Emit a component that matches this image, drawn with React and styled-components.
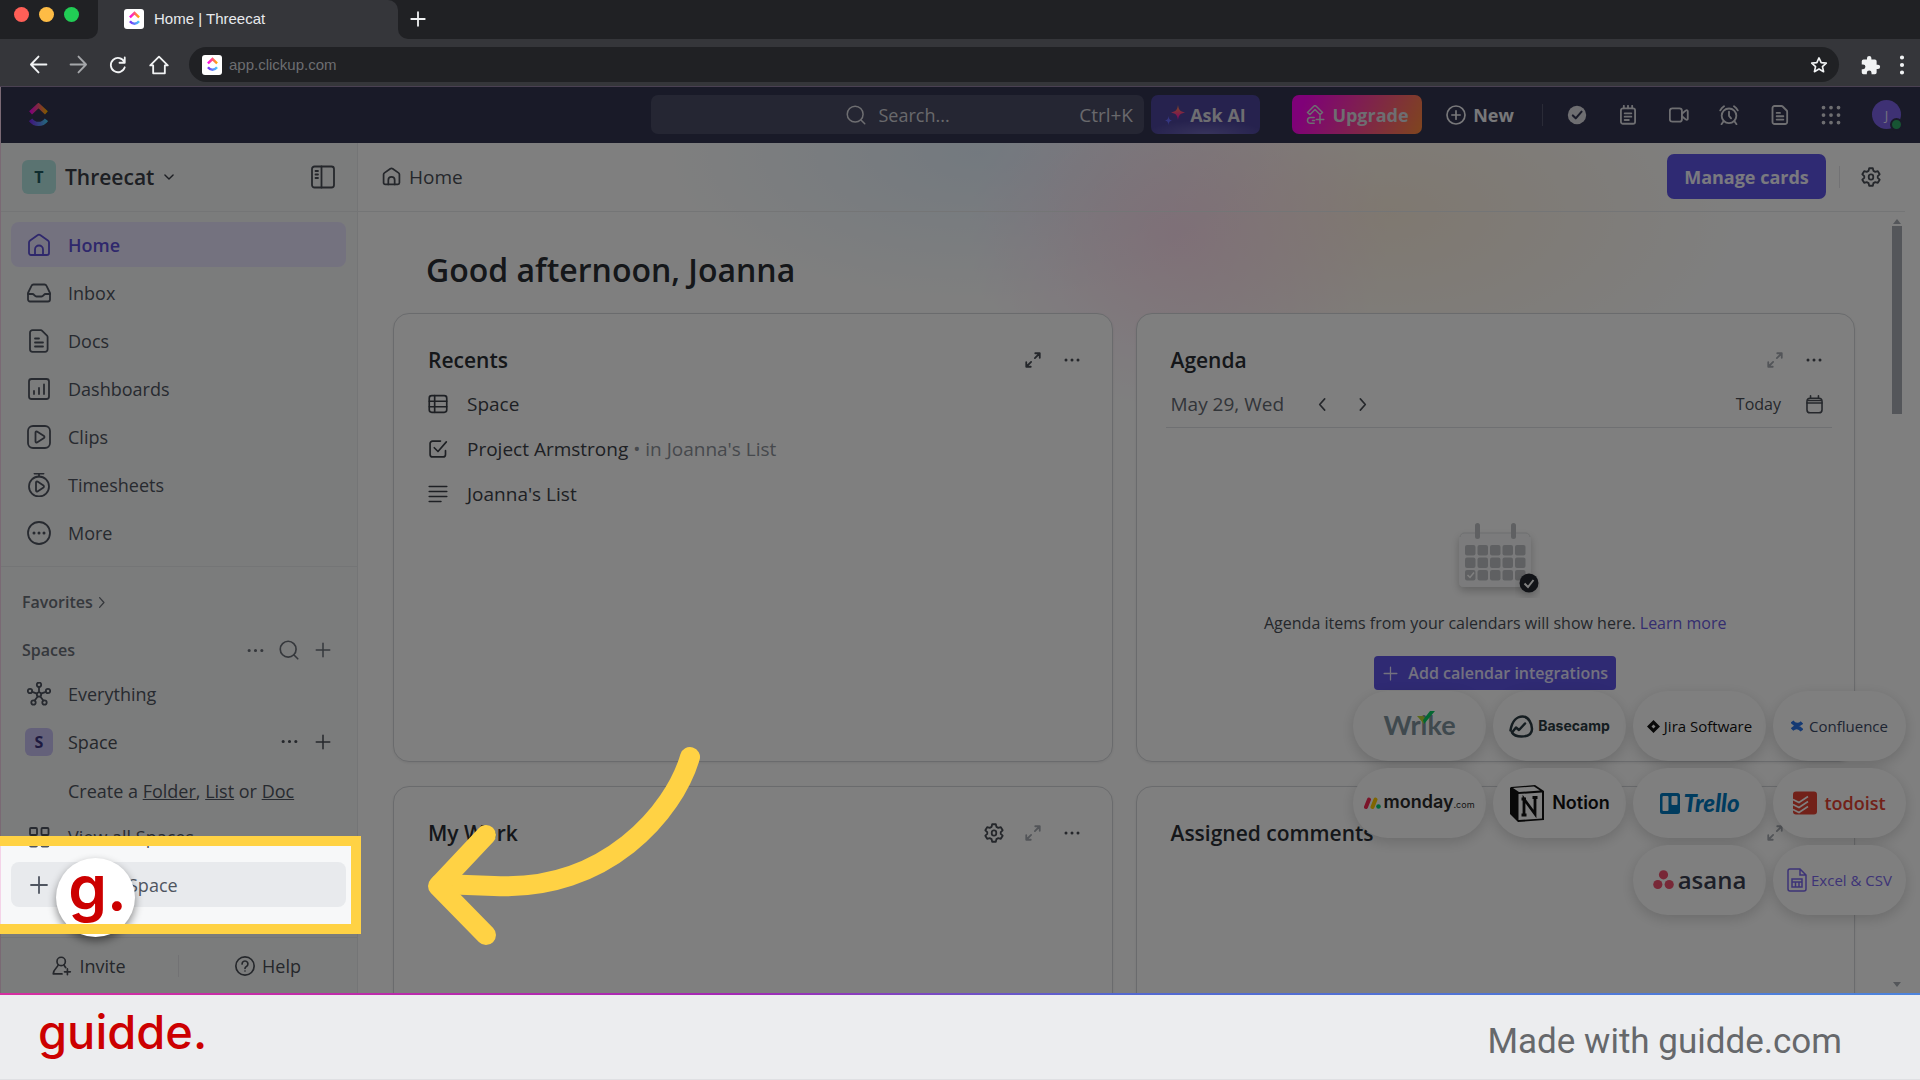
import React from "react";
import styled, { createGlobalStyle, css } from "styled-components";

const sans = `"Open Sans", "Noto Sans", sans-serif`;

const GlobalStyle = createGlobalStyle`
  *, *::before, *::after { box-sizing: border-box; }
  body { margin: 0; font-family: ${sans}; font-size: 18px; line-height: 24px; color: #4a4f57; }
  button, input { font: inherit; color: inherit; border: 0; padding: 0; margin: 0; background: none; }
  button { cursor: pointer; }
  input { outline: none; min-width: 0; }
  a { color: inherit; }
  h1, h2, ul { margin: 0; padding: 0; }
  ul { list-style: none; }
`;

/* ---------- icons ---------- */

const Svg = styled.svg`
  display: block;
  flex: none;
  fill: none;
  stroke: currentColor;
  stroke-width: ${(p) => p.$weight || 1.8};
  stroke-linecap: round;
  stroke-linejoin: round;
`;

function Icon({ size = 24, weight, children }) {
  return (
    <Svg width={size} height={size} viewBox="0 0 24 24" $weight={weight} aria-hidden="true">
      {children}
    </Svg>
  );
}

const glyphs = {
  home: (
    <>
      <path d="M2 9.600c0-.9.4-1.700 1.100-2.200l7.400-5.200a2.600 2.600 0 0 1 3 0l7.400 5.200c.7.500 1.100 1.300 1.100 2.200V20a2 2 0 0 1-2 2H4a2 2 0 0 1-2-2z" />
      <path d="M8 22v-5.500a4 4 0 0 1 8 0V22" />
    </>
  ),
  inbox: (
    <>
      <path d="M6.500 3.500h11c.8 0 1.600.5 1.900 1.200L23 12v6.500a2 2 0 0 1-2 2H3a2 2 0 0 1-2-2V12l3.600-7.300c.3-.7 1.100-1.200 1.900-1.200z" />
      <path d="M1 13h4.500c1.700 0 2 2.500 4 2.500h5c2 0 2.300-2.500 4-2.500H23" />
    </>
  ),
  doc: (
    <>
      <path d="M5.500 1.200h8.300c.5 0 1 .2 1.400.6l4.800 4.800c.4.400.6.9.6 1.400v12.300a2.500 2.500 0 0 1-2.500 2.500H5.500A2.500 2.500 0 0 1 3 20.300V3.700a2.500 2.500 0 0 1 2.500-2.500z" />
      <path d="M8 9.500h4M8 13.500h8M8 17.500h8" />
    </>
  ),
  dashboard: (
    <>
      <rect x="2" y="2" width="20" height="20" rx="2.500" />
      <path d="M7 14v3M12 11v6M17 7.500V17" />
    </>
  ),
  clip: (
    <>
      <rect x="1" y="1" width="22" height="22" rx="5" />
      <path d="M8.500 7.500c0-.8.8-1.200 1.500-.9l7 4.500c.6.400.6 1.400 0 1.800l-7 4.500c-.7.300-1.500-.1-1.500-.9z" />
    </>
  ),
  timer: (
    <>
      <circle cx="12" cy="13.500" r="10" />
      <path d="M7.500.5h9M12 .5v3" />
      <path d="M9 9.500c0-.8.8-1.200 1.500-.9l6 4c.6.400.6 1.400 0 1.800l-6 4c-.7.300-1.500-.1-1.500-.9z" />
    </>
  ),
  more: (
    <>
      <circle cx="12" cy="12" r="11" />
      <path d="M7 12h.01M12 12h.01M17 12h.01" strokeWidth="3" />
    </>
  ),
  dots: <path d="M4 12h.01M12 12h.01M20 12h.01" strokeWidth="4" />,
  plus: <path d="M12 3v18M3 12h18" />,
  search: (
    <>
      <circle cx="11" cy="11" r="9.500" />
      <path d="m18 18 4.500 4.500" />
    </>
  ),
  down: <path d="m5 8.500 7 7 7-7" />,
  left: <path d="m15.500 3-8 9 8 9" />,
  right: <path d="m8.500 3 8 9-8 9" />,
  panel: (
    <>
      <rect x="1" y="1.500" width="22" height="21" rx="2.500" />
      <path d="M10.500 1.500v21M4.500 6h2.500M4.500 9.500h2.500M4.500 13h2.500" />
    </>
  ),
  everything: (
    <>
      <circle cx="12" cy="12.500" r="2.200" />
      <circle cx="12" cy="2.800" r="2.200" />
      <circle cx="3" cy="9" r="2.200" />
      <circle cx="21" cy="9" r="2.200" />
      <circle cx="6.500" cy="20.500" r="2.200" />
      <circle cx="17.500" cy="20.500" r="2.200" />
      <path d="M12 5v5M5.200 9.800l4.700 1.900M18.800 9.800l-4.700 1.900M7.700 18.600l3-4.200M16.300 18.600l-3-4.200" />
    </>
  ),
  grid: (
    <>
      <rect x="3" y="3" width="7" height="7" rx="1" />
      <rect x="14.500" y="3" width="7" height="7" rx="1" />
      <rect x="3" y="14.500" width="7" height="7" rx="1" />
      <rect x="14.500" y="14.500" width="7" height="7" rx="1" />
    </>
  ),
  invite: (
    <>
      <circle cx="11" cy="6.500" r="5" />
      <path d="M7.500 10.500C7 14 2 15 1.500 21.500H12M14.500 10.500c.3 1.500 1 2.500 2 3.500M18.500 15.500v7M15 19h7" />
    </>
  ),
  help: (
    <>
      <circle cx="12" cy="12" r="11" />
      <path d="M8.500 9.500a3.500 3.500 0 1 1 5.300 3c-1.100.7-1.800 1.300-1.800 2.500M12 18h.01" />
    </>
  ),
  gear: (
    <>
      <path d="M9.800 1.500h4.400l.7 3.100 2.300 1.300 3-.9 2.200 3.800-2.300 2.100v2.200l2.300 2.100-2.200 3.800-3-.9-2.300 1.300-.7 3.100H9.800l-.7-3.100-2.300-1.300-3 .9-2.200-3.800 2.300-2.100v-2.200L1.600 8.800 3.800 5l3 .9 2.300-1.300z" />
      <rect x="9.300" y="8.800" width="5.400" height="6.400" rx="2.500" />
    </>
  ),
  expand: <path d="M14.500 9.500 21 3M15 3h6v6M9.500 14.500 3 21M3 15v6h6" />,
  table: (
    <>
      <rect x="1.500" y="2" width="21" height="20" rx="3" />
      <path d="M8 2v20M1.500 8.700h21M1.500 15.300h21" />
    </>
  ),
  task: (
    <>
      <path d="M15 2.500H5.500a3 3 0 0 0-3 3v13a3 3 0 0 0 3 3H18a3 3 0 0 0 3-3V14" />
      <path d="m7.500 10.500 4.500 4.500L22 3.500" />
    </>
  ),
  list: <path d="M1.500 3h21M1.500 9h21M1.500 15h21M1.500 21h14" />,
  calendar: (
    <>
      <rect x="2.500" y="4" width="19" height="18.500" rx="4" />
      <path d="M2.500 10h19M7 1v3M17 1v3M4 7h16" />
    </>
  ),
  addCircle: (
    <>
      <circle cx="12" cy="12" r="10.800" />
      <path d="M12 7v10M7 12h10" />
    </>
  ),
  checkSolid: (
    <>
      <circle cx="12" cy="12" r="11" fill="currentColor" stroke="none" />
      <path d="m7 12.500 3.500 3.500 7-8" stroke="#323450" strokeWidth="2.500" />
    </>
  ),
  notepad: (
    <>
      <rect x="3.500" y="4" width="17" height="18.500" rx="2.500" />
      <path d="M7 1v3M12 1v3M17 1v3M8 10h8M8 14h8M8 18h5" />
    </>
  ),
  video: (
    <>
      <rect x="1" y="4" width="14.500" height="16" rx="3" />
      <path d="m15.500 10.500 4.800-4c1-.7 2.200-.2 2.200 1v9c0 1.200-1.200 1.700-2.200 1l-4.800-4" />
    </>
  ),
  alarm: (
    <>
      <circle cx="12" cy="13" r="8.800" />
      <path d="M12 8v5l2.500 3M1.500 6.500a12 12 0 0 1 4.500-5M22.500 6.500a12 12 0 0 0-4.500-5M5.500 19.500 3 23M18.500 19.500 21 23" />
    </>
  ),
  apps: (
    <path
      d="M3 3h.01M12 3h.01M21 3h.01M3 12h.01M12 12h.01M21 12h.01M3 21h.01M12 21h.01M21 21h.01"
      strokeWidth="4.500"
    />
  ),
  upgrade: (
    <>
      <path d="m3 9 7.500-7.500a2 2 0 0 1 3 0L21 9l-3 2.500-6-6-6 6z" />
      <path d="M11 15H6.500a3.500 3.500 0 0 0 0 7H11M9 18.500h2.500M18 13v9M13.500 17.500h9" />
    </>
  ),
  back: <path d="M22 12H3M12 2 2.500 12 12 22" />,
  forward: <path d="M2 12h19M12 2l9.500 10L12 22" />,
  reload: <path d="M20.500 8A9.500 9.500 0 1 0 21 15M21 2v7h-7" />,
  house: <path d="M1.500 12.500 12 2l10.500 10.500H19V22H5v-9.500z" />,
  star: <path d="m12 2.500 2.900 6.300 6.800.7-5.100 4.600 1.500 6.800L12 17.400l-6.100 3.500 1.500-6.800-5.100-4.600 6.800-.7z" />,
};

const puzzle =
  "M20.500 11H19V7a2 2 0 0 0-2-2h-4V3.500a2.500 2.500 0 0 0-5 0V5H4a2 2 0 0 0-2 2v3.800h1.500a2.700 2.700 0 0 1 0 5.400H2V20a2 2 0 0 0 2 2h3.800v-1.500a2.700 2.700 0 0 1 5.400 0V22H17a2 2 0 0 0 2-2v-4h1.500a2.500 2.500 0 0 0 0-5z";

function ClickUpMark({ width, height }) {
  return (
    <svg width={width} height={height} viewBox="0 0 18 22" aria-hidden="true">
      <defs>
        <linearGradient id="markTop" x1="0" x2="1">
          <stop offset="0" stopColor="#ff02f0" />
          <stop offset="1" stopColor="#ffb000" />
        </linearGradient>
        <linearGradient id="markLow" x1="0" x2="1">
          <stop offset="0" stopColor="#7b2ff7" />
          <stop offset="1" stopColor="#49ccf9" />
        </linearGradient>
      </defs>
      <path d="M1.500 9 9 2l7.500 7" fill="none" stroke="url(#markTop)" strokeWidth="4" />
      <path d="M1.500 15.500c4 5.300 11 5.300 15 0" fill="none" stroke="url(#markLow)" strokeWidth="4" />
    </svg>
  );
}

/* ---------- page and browser frame ---------- */

const Page = styled.div`
  height: 100vh;
  display: flex;
  flex-direction: column;
  overflow: hidden;
`;

const TabStrip = styled.div`
  display: flex;
  height: 39px;
  flex: none;
  background: #35363a;
  font-family: "Liberation Sans", Arial, sans-serif;
  font-size: 15px;
  color: #e8eaed;
`;

const Lights = styled.div`
  display: flex;
  gap: 10px;
  width: 98px;
  padding: 7px 0 0 14px;
  background: #202124;
  border-bottom-right-radius: 10px;
`;

const Light = styled.span`
  width: 15px;
  height: 15px;
  border-radius: 50%;
  background: ${(p) => p.$color};
`;

const TabBack = styled.div`
  width: 300px;
  background: linear-gradient(90deg, #35363a 50%, #202124 50%);
`;

const Tab = styled.div`
  display: flex;
  gap: 10px;
  align-items: center;
  height: 39px;
  padding: 0 26px 2px;
  background: #35363a;
  border-radius: 0 10px 0 0;
`;

const Favicon = styled.span`
  display: grid;
  place-items: center;
  flex: none;
  width: 20px;
  height: 20px;
  border-radius: 3px;
  background: #fff;
`;

const StripRest = styled.div`
  flex: 1;
  padding: 9px 11px 0;
  background: #202124;
  border-bottom-left-radius: 10px;
`;

const BrowserButton = styled.button`
  display: grid;
  place-items: center;
  width: ${(p) => p.$width || 18}px;
  height: 20px;
  flex: none;
  color: ${(p) => (p.$muted ? "#a5a7aa" : "#f1f3f4")};
`;

const Toolbar = styled.div`
  display: flex;
  align-items: center;
  flex: none;
  height: 48px;
  padding: 4px 10px 0 29px;
  background: #35363a;
  border-bottom: 1px solid #4a4152;
`;

const NavButtons = styled.div`
  display: flex;
  gap: 22px;
  margin-right: 22px;
`;

const UrlBar = styled.label`
  display: flex;
  align-items: center;
  flex: 1;
  gap: 7px;
  height: 35px;
  padding: 0 11px 0 13px;
  border-radius: 18px;
  background: #202124;
  font-family: "Liberation Sans", Arial, sans-serif;
  font-size: 15px;
  color: #6d6e71;

  input { flex: 1; }
`;

const Extras = styled.div`
  display: flex;
  align-items: center;
  gap: 12px;
  margin-left: 21px;
`;

/* ---------- app frame ---------- */

const AppArea = styled.div`
  position: relative;
  display: flex;
  flex-direction: column;
  flex: 1;
  min-height: 0;
  overflow: hidden;

  &::before {
    content: "";
    position: absolute;
    left: 0;
    top: 0;
    bottom: 0;
    width: 1px;
    background: #f4d3e8;
  }
`;

const GradientLine = styled.div`
  height: 2px;
  flex: none;
  background: linear-gradient(90deg, #d62fa0, #a428b4 38%, #5468d0 58%, #4d84dc);
`;

const TopBar = styled.header`
  display: flex;
  align-items: center;
  justify-content: flex-end;
  flex: none;
  height: 56px;
  padding: 0 19px 1px 29px;
  background: #323450;
  color: #dcdce2;
`;

const TopLogo = styled.a`
  display: block;
  margin-right: auto;
  height: 24px;
`;

const SearchBox = styled.label`
  display: grid;
  grid-template-columns: 1fr auto 1fr;
  align-items: center;
  width: 493px;
  height: 39px;
  margin-right: 7px;
  padding: 0 11px;
  border-radius: 7px;
  background: #4a4c66;
`;

const SearchField = styled.span`
  grid-column: 2;
  display: flex;
  align-items: center;
  gap: 13px;

  input { width: 71px; }
  input::placeholder { color: #d2d2d9; opacity: 1; }
`;

const Shortcut = styled.span`
  justify-self: end;
  font-size: 19px;
  color: #d2d2d9;
`;

const TopButton = styled.button`
  display: flex;
  align-items: center;
  justify-content: center;
  gap: 7px;
  height: 39px;
  border-radius: 7px;
  font-weight: 700;
  white-space: nowrap;
  ${(p) =>
    p.$kind === "ai" &&
    css`
      width: 109px;
      gap: 5px;
      margin-right: 32px;
      background: radial-gradient(60px 14px at 50% 100%, #6f68b8, transparent), #4c449c;
    `}
  ${(p) =>
    p.$kind === "upgrade" &&
    css`
      width: 130px;
      margin-right: 24px;
      background: linear-gradient(115deg, #ff02f0 10%, #ff8c3c);
    `}
  ${(p) =>
    p.$kind === "new" &&
    css`
      width: 68px;
      margin-right: 28px;
      color: #f0f0f4;
    `}
`;

const Divider = styled.span`
  width: 1px;
  height: 22px;
  background: ${(p) => p.$color || "#e4e5e8"};
`;

const Shortcuts = styled.nav`
  display: flex;
  justify-content: space-between;
  width: 278px;
  margin: 0 29px 0 22px;
`;

const IconButton = styled.button`
  display: grid;
  place-items: center;
  width: 24px;
  height: 24px;
  flex: none;
  color: ${(p) => (p.$faint ? "#a6abb2" : "inherit")};
`;

const Avatar = styled.button`
  position: relative;
  width: 29px;
  height: 29px;
  border-radius: 50%;
  background: #7c62e8;
  color: #e8e0ff;
  font-size: 13px;

  &::after {
    content: "";
    position: absolute;
    right: -2px;
    bottom: -2px;
    width: 13px;
    height: 13px;
    border: 2px solid #323450;
    border-radius: 50%;
    background: #2fa866;
  }
`;

const Body = styled.div`
  display: flex;
  flex: 1;
  min-height: 0;
`;

/* ---------- sidebar ---------- */

const Sidebar = styled.aside`
  display: flex;
  flex-direction: column;
  width: 358px;
  flex: none;
  background: #f7f8f9;
  border-right: 1px solid #e8eaed;
`;

const Workspace = styled.div`
  display: flex;
  align-items: center;
  height: 69px;
  flex: none;
  padding: 0 22px;
  border-bottom: 1px solid #e8eaed;
`;

const Badge = styled.span`
  display: grid;
  place-items: center;
  width: ${(p) => p.$size}px;
  height: ${(p) => p.$size}px;
  flex: none;
  border-radius: 6px;
  background: ${(p) => p.$bg};
  color: ${(p) => p.$fg};
  font-size: 16px;
  font-weight: 700;
`;

const WorkspaceName = styled.button`
  display: flex;
  align-items: center;
  gap: 8px;
  margin: 0 auto 0 9px;
  font-size: 21px;
  font-weight: 600;
  color: #3a3e46;
`;

const NavList = styled.ul`
  display: flex;
  flex-direction: column;
  gap: 3px;
  padding: ${(p) => p.$pad};
`;

const NavItem = styled.a`
  display: flex;
  align-items: center;
  gap: 17px;
  height: 45px;
  padding: 0 10px 0 16px;
  border-radius: 8px;
  text-decoration: none;
  color: #4f5560;
  ${(p) =>
    p.$active &&
    css`
      background: #e9e4ff;
      color: #5e50d8;
      font-weight: 600;
    `}
  ${(p) =>
    p.$hover &&
    css`
      background: #e8eaed;
    `}
`;

const Group = styled.div`
  border-top: ${(p) => (p.$line ? "1px solid #e8eaed" : "0")};
  padding-top: ${(p) => p.$top}px;
`;

const SectionTitle = styled.div`
  display: flex;
  align-items: center;
  height: 24px;
  padding: 0 22px;
  gap: ${(p) => (p.$tight ? 2 : 10)}px;
  font-size: 16px;
  font-weight: 600;
  color: #6b7078;
`;

const SectionName = styled.span`
  margin-right: ${(p) => (p.$grow ? "auto" : "0")};
`;

const SpaceRow = styled.div`
  display: flex;
  align-items: center;
  height: 45px;
  padding: 0 22px 0 25px;
  gap: 10px;
`;

const SpaceName = styled.span`
  margin: 0 auto 0 5px;
`;

const CreateHint = styled.p`
  margin: 13px 0 5px;
  height: 28px;
  padding: 2px 0 0 68px;
  color: #4f5560;
`;

const SideFooter = styled.div`
  display: grid;
  grid-template-columns: 1fr 1px 1fr;
  align-items: center;
  height: 56px;
  margin-top: auto;
  border-top: 1px solid #e8eaed;
`;

const FooterButton = styled.button`
  display: flex;
  align-items: center;
  justify-content: center;
  gap: 7px;
`;

/* ---------- main ---------- */

const Main = styled.main`
  display: flex;
  flex-direction: column;
  flex: 1;
  min-width: 0;
  background:
    radial-gradient(210px 180px at 820px 90px, rgba(255, 200, 236, 0.5), transparent),
    radial-gradient(360px 190px at 1030px 70px, rgba(255, 232, 205, 0.6), transparent),
    radial-gradient(320px 150px at 620px 10px, rgba(215, 235, 255, 0.6), transparent),
    #fff;
`;

const Crumbs = styled.div`
  display: flex;
  align-items: center;
  height: 69px;
  flex: none;
  margin-right: 15px;
  padding: 0 22px 1px 24px;
  border-bottom: 1px solid #e8eaed;
`;

const Crumb = styled.a`
  display: flex;
  align-items: center;
  gap: 8px;
  margin-right: auto;
  font-size: 19px;
  text-decoration: none;
  color: #4a4f57;
`;

const ManageButton = styled.button`
  width: 159px;
  height: 45px;
  margin-right: 13px;
  border-radius: 7px;
  background: #5e54e6;
  color: #f4f3ff;
  font-weight: 700;
`;

const GearSlot = styled.span`
  margin-left: 19px;
`;

const ScrollRow = styled.div`
  display: flex;
  flex: 1;
  min-height: 0;
`;

const Content = styled.div`
  flex: 1;
  min-width: 0;
  padding: 36px 37px 0 35px;
  overflow: hidden;
`;

const Greeting = styled.h1`
  height: 65px;
  padding-left: 33px;
  font-size: 32px;
  line-height: 44px;
  font-weight: 600;
  color: #2a2e34;
`;

const Cards = styled.div`
  display: grid;
  grid-template-columns: 1fr 1fr;
  grid-auto-rows: 449px;
  gap: 24px 23px;
`;

const Card = styled.section`
  display: flex;
  flex-direction: column;
  padding: 33px 28px 0 34px;
  border: 1px solid #d5d7db;
  border-radius: 16px;
  background: #fff;
  box-shadow: 0 1px 3px rgba(0, 0, 0, 0.08);
`;

const CardHead = styled.div`
  display: flex;
  align-items: center;
  gap: 15px;
  height: 26px;
  margin-bottom: 8px;
`;

const CardTitle = styled.h2`
  margin-right: auto;
  font-size: 21px;
  font-weight: 600;
  color: #2a2e34;
`;

const RecentItem = styled.li`
  display: flex;
  align-items: center;
  height: 45px;
  gap: 19px;
  font-size: 19px;
  color: #3c4148;
`;

const Muted = styled.span`
  color: #8d929a;
`;

const DateRow = styled.div`
  display: flex;
  align-items: center;
  gap: 16px;
  height: 47px;
  margin: 0 -6px 0 -5px;
  padding: 0 6px 0 5px;
  border-bottom: 1px solid #dfe1e4;
`;

const DateText = styled.span`
  margin-right: 10px;
  font-size: 19px;
  color: #656a73;
`;

const TodayButton = styled.button`
  margin: 0 5px 0 auto;
  font-size: 16px;
`;

const Empty = styled.div`
  display: flex;
  flex-direction: column;
  align-items: center;
  padding-top: 92px;
  margin-right: 6px;
  font-size: 16px;
  white-space: nowrap;
`;

const EmptyText = styled.p`
  margin: 13px 0 21px;

  a { color: #6a5be0; text-decoration: none; }
`;

const AddButton = styled.button`
  display: flex;
  align-items: center;
  justify-content: center;
  gap: 9px;
  width: 242px;
  height: 34px;
  border-radius: 4px;
  background: #5e54e6;
  color: #e6e3ff;
  font-weight: 600;
`;

const ScrollTrack = styled.div`
  display: flex;
  flex-direction: column;
  align-items: center;
  width: 10px;
  margin-right: 18px;
  padding: 7px 0 6px;
  gap: 2px;
`;

const ScrollThumb = styled.div`
  width: 10px;
  height: 188px;
  margin-bottom: auto;
  background: #a8adb4;
`;

const Caret = styled.span`
  border: 4px solid transparent;
  border-top-width: ${(p) => (p.$down ? "5px" : "0")};
  border-bottom-width: ${(p) => (p.$down ? "0" : "5px")};
  border-top-color: #a8adb4;
  border-bottom-color: #a8adb4;
`;

/* ---------- floating import pills ---------- */

const Imports = styled.div`
  position: absolute;
  right: 14px;
  bottom: 78px;
  display: flex;
  flex-wrap: wrap;
  justify-content: flex-end;
  gap: 7px;
  width: 560px;
`;

const Pill = styled.button`
  display: flex;
  align-items: center;
  justify-content: center;
  gap: ${(p) => p.$gap || 4}px;
  width: 133px;
  height: 70px;
  border-radius: 35px;
  background: #fff;
  box-shadow: 0 4px 14px rgba(0, 0, 0, 0.16);
  white-space: nowrap;

  svg { flex: none; }
`;

const Brand = styled.span`
  font-family: ${(p) => p.$font || sans};
  font-size: ${(p) => p.$size}px;
  font-weight: ${(p) => p.$weight || 400};
  font-style: ${(p) => (p.$italic ? "italic" : "normal")};
  color: ${(p) => p.$color};
`;

const Wrike = styled.span`
  position: relative;

  svg {
    position: absolute;
    left: 34px;
    top: -2px;
  }
`;

/* ---------- tutorial overlay ---------- */

const Dim = styled.div`
  position: absolute;
  left: -11px;
  bottom: 59px;
  width: 372px;
  height: 98px;
  box-shadow: 0 0 0 3000px rgba(0, 0, 0, 0.5);
  pointer-events: none;
`;

const Frame = styled(Dim)`
  border: 10px solid #ffd244;
  box-shadow: none;
`;

const Bubble = styled.div`
  position: absolute;
  left: 56px;
  bottom: 56px;
  display: flex;
  justify-content: center;
  width: 79px;
  height: 79px;
  padding-left: 4px;
  border-radius: 50%;
  background: #fff;
  box-shadow: 0 4px 8px rgba(0, 0, 0, 0.45);
  font-family: Inter, sans-serif;
  font-size: 62px;
  line-height: 60px;
  font-weight: 600;
  color: #cc0000;
`;

const Arrow = styled.svg`
  position: absolute;
  left: 420px;
  bottom: 40px;
  pointer-events: none;
`;

const Banner = styled.footer`
  display: flex;
  align-items: center;
  justify-content: space-between;
  flex: none;
  height: 85px;
  padding: 0 78px 0 38px;
  background: #ecedef;
  border-bottom: 1px solid #dfe0e3;
`;

const Guidde = styled.span`
  padding-bottom: 10px;
  font-family: Inter, sans-serif;
  font-size: 47px;
  line-height: 60px;
  font-weight: 500;
  color: #cc0000;
`;

const MadeWith = styled.span`
  padding-top: 10px;
  font-family: Roboto, sans-serif;
  font-size: 35px;
  line-height: 42px;
  color: #66686b;
`;

/* ---------- data ---------- */

const navItems = [
  ["Home", "home"],
  ["Inbox", "inbox"],
  ["Docs", "doc"],
  ["Dashboards", "dashboard"],
  ["Clips", "clip"],
  ["Timesheets", "timer"],
  ["More", "more"],
];

const topIcons = [
  ["Tasks", "checkSolid"],
  ["Notepad", "notepad"],
  ["Record clip", "video"],
  ["Reminders", "alarm"],
  ["New doc", "doc"],
  ["Apps", "apps"],
];

function HeadActions({ gear, faint = true }) {
  return (
    <>
      {gear && (
        <IconButton aria-label="Settings">
          <Icon size={20} weight={2.2}>{glyphs.gear}</Icon>
        </IconButton>
      )}
      <IconButton aria-label="Expand" $faint={faint}>
        <Icon size={18} weight={2.4}>{glyphs.expand}</Icon>
      </IconButton>
      <IconButton aria-label="Card options">
        <Icon size={18}>{glyphs.dots}</Icon>
      </IconButton>
    </>
  );
}

function CalendarArt() {
  const cells = [];
  for (let r = 0; r < 3; r++) {
    for (let c = 0; c < 5; c++) {
      cells.push(<rect key={`${r}-${c}`} x={15 + c * 12.5} y={25 + r * 12.5} width="10.500" height="10.500" rx="2" fill="#bfc1c4" />);
    }
  }
  return (
    <svg width="90" height="78" viewBox="0 0 90 78" aria-hidden="true">
      <defs>
        <filter id="soft" x="-20%" y="-20%" width="140%" height="150%">
          <feDropShadow dx="0" dy="4" stdDeviation="4" floodOpacity="0.22" />
        </filter>
      </defs>
      <rect x="9" y="13" width="72" height="54" rx="5" fill="#f6f7f8" filter="url(#soft)" />
      <path d="M10 17c0-2 2-4 4-4h62c2 0 4 2 4 4" fill="none" stroke="#dcdee0" />
      {cells}
      <path d="m17.500 55 2.500 2.500 4-5" fill="none" stroke="#fff" strokeWidth="1.500" />
      <rect x="25" y="3" width="5" height="16" rx="2.500" fill="#bfc1c4" />
      <rect x="61" y="3" width="5" height="16" rx="2.500" fill="#bfc1c4" />
      <circle cx="79" cy="63" r="9.500" fill="#23252f" filter="url(#soft)" />
      <path d="m74.500 63.500 3.500 3.500 5.500-7" fill="none" stroke="#fff" strokeWidth="2" />
    </svg>
  );
}

function ImportPills() {
  return (
    <Imports>
      <Pill>
        <Wrike>
          <Brand $font="Lato, sans-serif" $size={27} $weight={700} $color="#7f929c">Wrike</Brand>
          <svg width="18" height="14" viewBox="0 0 18 14" aria-hidden="true">
            <path d="M0 5h6l3 3-2 5z" fill="#b6d334" />
            <path d="m7 13-1-4 7-9h5z" fill="#08cf65" />
          </svg>
        </Wrike>
      </Pill>
      <Pill>
        <svg width="25" height="23" viewBox="0 0 25 23" fill="none" stroke="#2b3a42" strokeWidth="2.500" strokeLinecap="round" strokeLinejoin="round" aria-hidden="true">
          <path d="M1.500 15.500C3 6 8 1.500 13.500 1.500c6 0 9.500 7 9.500 12.500 0 5-4 7.500-10.500 7.500-5 0-8-1.500-9.500-4l4-5 3 2.500L16 8.500" />
        </svg>
        <Brand $font="Inter, sans-serif" $size={14} $weight={700} $color="#2b3a42">Basecamp</Brand>
      </Pill>
      <Pill>
        <svg width="13" height="13" viewBox="0 0 13 13" aria-hidden="true">
          <path d="M6.500 0 13 6.500 6.500 13 0 6.500zM6.500 4.500l-2 2 2 2 2-2z" fill="#111" fillRule="evenodd" />
        </svg>
        <Brand $size={15} $color="#111">Jira Software</Brand>
      </Pill>
      <Pill $gap={6}>
        <svg width="12" height="12" viewBox="0 0 12 12" fill="none" stroke="#2b74e8" strokeWidth="3.600" aria-hidden="true">
          <path d="M1 1.500c3 4 7 4 10 1M1 9.500c3-3 7-3 10 1" />
        </svg>
        <Brand $size={15} $color="#3d4a66">Confluence</Brand>
      </Pill>

      <Pill $gap={2}>
        <svg width="17" height="12" viewBox="0 0 17 12" strokeWidth="4" strokeLinecap="round" aria-hidden="true">
          <path d="M2 10 5 2.500" stroke="#f62b54" />
          <path d="M8.500 10l3-7.500" stroke="#ffcc00" />
          <circle cx="14.500" cy="9.500" r="2.300" fill="#00ca72" />
        </svg>
        <span>
          <Brand $font="Inter, sans-serif" $size={18} $weight={600} $color="#2b2b2b">monday</Brand>
          <Brand $font="Inter, sans-serif" $size={9} $color="#2b2b2b">.com</Brand>
        </span>
      </Pill>
      <Pill $gap={7}>
        <svg width="36" height="37" viewBox="0 0 36 37" aria-hidden="true">
          <path d="m2 2 24-2 9 6v29L9 37l-8-8V3z" fill="#111" />
          <path d="m4 3 21-1.500 6 4L10 7z" fill="#fff" />
          <path d="m9.500 9 23.500-1.500v26L9.500 35z" fill="#fff" />
          <path d="M15 30V14l11 15V12M12.500 14H17M23.500 12.500h5M12.500 30h5" fill="none" stroke="#111" strokeWidth="2.800" />
        </svg>
        <Brand $font="Inter, sans-serif" $size={18} $weight={600} $color="#111">Notion</Brand>
      </Pill>
      <Pill>
        <svg width="20" height="21" viewBox="0 0 20 21" aria-hidden="true">
          <rect width="20" height="21" rx="2.500" fill="#0079bf" />
          <rect x="2.500" y="3" width="6" height="15" rx="1" fill="#fff" />
          <rect x="11.500" y="3" width="6" height="9" rx="1" fill="#fff" />
        </svg>
        <Brand $font="Lato, sans-serif" $size={24} $weight={900} $italic $color="#0079bf">Trello</Brand>
      </Pill>
      <Pill $gap={7}>
        <svg width="24" height="24" viewBox="0 0 24 23" fill="none" stroke="#fff" strokeWidth="1.600" aria-hidden="true">
          <rect width="24" height="23" rx="3" fill="#e44332" stroke="none" />
          <path d="m0 8 6 3 9-6M0 13l6 3 9-6M0 18l6 3 9-6" />
        </svg>
        <Brand $size={18} $weight={600} $color="#e44332">todoist</Brand>
      </Pill>

      <Pill>
        <svg width="21" height="20" viewBox="0 0 21 20" fill="#f0506e" aria-hidden="true">
          <circle cx="10.500" cy="4.800" r="4.600" />
          <circle cx="4.800" cy="14.500" r="4.600" />
          <circle cx="16.200" cy="14.500" r="4.600" />
        </svg>
        <Brand $size={24} $weight={600} $color="#3a3f50">asana</Brand>
      </Pill>
      <Pill>
        <svg width="20" height="24" viewBox="0 0 20 24" fill="none" stroke="#7b68ee" strokeWidth="1.500" aria-hidden="true">
          <path d="M3 1h10l6 6v14a2 2 0 0 1-2 2H3a2 2 0 0 1-2-2V3a2 2 0 0 1 2-2zM13 1v6h6" />
          <path d="M5 11h10v8H5zM5 14h10M8.500 14v5M12 14v5" />
        </svg>
        <Brand $size={15} $color="#7b68ee">Excel &amp; CSV</Brand>
      </Pill>
    </Imports>
  );
}

export default function App() {
  return (
    <Page>
      <GlobalStyle />
      <TabStrip>
        <Lights>
          <Light $color="#ff5f57" />
          <Light $color="#febc45" />
          <Light $color="#21cc55" />
        </Lights>
        <TabBack>
          <Tab>
            <Favicon><ClickUpMark width={11} height={15} /></Favicon>
            Home | Threecat
          </Tab>
        </TabBack>
        <StripRest>
          <BrowserButton $width={16} aria-label="New tab"><Icon size={18} weight={2.4}>{glyphs.plus}</Icon></BrowserButton>
        </StripRest>
      </TabStrip>
      <Toolbar>
        <NavButtons>
          <BrowserButton aria-label="Back"><Icon size={19} weight={2.4}>{glyphs.back}</Icon></BrowserButton>
          <BrowserButton aria-label="Forward" $muted><Icon size={19} weight={2.4}>{glyphs.forward}</Icon></BrowserButton>
          <BrowserButton aria-label="Reload"><Icon size={18} weight={2.4}>{glyphs.reload}</Icon></BrowserButton>
          <BrowserButton aria-label="Home page"><Icon size={20} weight={2.2}>{glyphs.house}</Icon></BrowserButton>
        </NavButtons>
        <UrlBar>
          <Favicon><ClickUpMark width={11} height={15} /></Favicon>
          <input aria-label="Address" defaultValue="app.clickup.com" />
          <BrowserButton aria-label="Bookmark"><Icon size={18} weight={2.2}>{glyphs.star}</Icon></BrowserButton>
        </UrlBar>
        <Extras>
          <BrowserButton $width={20} aria-label="Extensions">
            <Icon size={21}><path d={puzzle} fill="currentColor" stroke="none" /></Icon>
          </BrowserButton>
          <BrowserButton aria-label="Browser menu">
            <Icon size={20}><path d="M12 3h.01M12 12h.01M12 21h.01" strokeWidth="5" /></Icon>
          </BrowserButton>
        </Extras>
      </Toolbar>

      <AppArea>
        <TopBar>
          <TopLogo href="#" aria-label="ClickUp"><ClickUpMark width={19} height={24} /></TopLogo>
          <SearchBox>
            <SearchField>
              <Icon size={20} weight={1.8}>{glyphs.search}</Icon>
              <input aria-label="Search" placeholder="Search..." />
            </SearchField>
            <Shortcut>Ctrl+K</Shortcut>
          </SearchBox>
          <TopButton $kind="ai">
            <svg width="20" height="20" viewBox="0 0 20 20" aria-hidden="true">
              <defs>
                <linearGradient id="spark" x2="0" y2="1">
                  <stop offset="0" stopColor="#ff9a3c" />
                  <stop offset="1" stopColor="#ff02c8" />
                </linearGradient>
              </defs>
              <path d="M13 0c.8 5 2 6.500 7 7.500-5 1-6.200 2.500-7 7.500-.8-5-2-6.500-7-7.500 5-1 6.200-2.500 7-7.500z" fill="url(#spark)" />
              <path d="M3.500 11c.4 3 1.200 4 3.500 4.500-2.300.5-3.100 1.500-3.500 4.500C3.100 17 2.300 16 0 15.500 2.300 15 3.100 14 3.500 11z" fill="#6a6cff" />
            </svg>
            Ask AI
          </TopButton>
          <TopButton $kind="upgrade"><Icon size={20} weight={1.8}>{glyphs.upgrade}</Icon>Upgrade</TopButton>
          <TopButton $kind="new"><Icon size={20} weight={2}>{glyphs.addCircle}</Icon>New</TopButton>
          <Divider $color="#55576f" />
          <Shortcuts>
            {topIcons.map(([label, name]) => (
              <IconButton key={name} aria-label={label}>
                <Icon size={20} weight={2.2}>{glyphs[name]}</Icon>
              </IconButton>
            ))}
          </Shortcuts>
          <Avatar aria-label="Account">J</Avatar>
        </TopBar>

        <Body>
          <Sidebar>
            <Workspace>
              <Badge $size={34} $bg="#b4e6e2" $fg="#1f5a60">T</Badge>
              <WorkspaceName>Threecat <Icon size={14} weight={2.4}>{glyphs.down}</Icon></WorkspaceName>
              <IconButton aria-label="Collapse sidebar"><Icon size={24}>{glyphs.panel}</Icon></IconButton>
            </Workspace>
            <NavList $pad="10px 11px 11px">
              {navItems.map(([label, name], i) => (
                <li key={name}>
                  <NavItem href="#" $active={i === 0}>
                    <Icon>{glyphs[name]}</Icon>
                    {label}
                  </NavItem>
                </li>
              ))}
            </NavList>
            <Group $line $top={23}>
              <SectionTitle $tight>
                <SectionName>Favorites</SectionName>
                <Icon size={13} weight={2.4}>{glyphs.right}</Icon>
              </SectionTitle>
            </Group>
            <Group $top={24}>
              <SectionTitle>
                <SectionName $grow>Spaces</SectionName>
                <IconButton aria-label="Space options"><Icon size={19}>{glyphs.dots}</Icon></IconButton>
                <IconButton aria-label="Search spaces"><Icon size={20} weight={2}>{glyphs.search}</Icon></IconButton>
                <IconButton aria-label="Add space"><Icon size={18} weight={2}>{glyphs.plus}</Icon></IconButton>
              </SectionTitle>
            </Group>
            <NavList $pad="9px 11px 3px">
              <li><NavItem href="#"><Icon>{glyphs.everything}</Icon>Everything</NavItem></li>
            </NavList>
            <SpaceRow>
              <Badge $size={28} $bg="#c9c2f5" $fg="#3c3480">S</Badge>
              <SpaceName>Space</SpaceName>
              <IconButton aria-label="More for Space"><Icon size={19}>{glyphs.dots}</Icon></IconButton>
              <IconButton aria-label="Add to Space"><Icon size={18} weight={2}>{glyphs.plus}</Icon></IconButton>
            </SpaceRow>
            <CreateHint>
              Create a <a href="#">Folder</a>, <a href="#">List</a> or <a href="#">Doc</a>
            </CreateHint>
            <NavList $pad="4px 11px 0">
              <li><NavItem href="#"><Icon>{glyphs.grid}</Icon>View all Spaces</NavItem></li>
              <li><NavItem href="#" $hover><Icon size={24}><path d="M12 4v16M4 12h16" /></Icon>Create Space</NavItem></li>
            </NavList>
            <SideFooter>
              <FooterButton><Icon size={20} weight={2}>{glyphs.invite}</Icon>Invite</FooterButton>
              <Divider />
              <FooterButton><Icon size={20} weight={2}>{glyphs.help}</Icon>Help</FooterButton>
            </SideFooter>
          </Sidebar>

          <Main>
            <Crumbs>
              <Crumb href="#"><Icon size={19} weight={2.2}>{glyphs.home}</Icon>Home</Crumb>
              <ManageButton>Manage cards</ManageButton>
              <Divider />
              <GearSlot>
                <IconButton aria-label="Home settings"><Icon size={20} weight={2.2}>{glyphs.gear}</Icon></IconButton>
              </GearSlot>
            </Crumbs>
            <ScrollRow>
              <Content>
                <Greeting>Good afternoon, Joanna</Greeting>
                <Cards>
                  <Card>
                    <CardHead><CardTitle>Recents</CardTitle><HeadActions faint={false} /></CardHead>
                    <ul>
                      <RecentItem><Icon size={20} weight={2}>{glyphs.table}</Icon>Space</RecentItem>
                      <RecentItem>
                        <Icon size={20} weight={2}>{glyphs.task}</Icon>
                        <span>Project Armstrong <Muted>• in Joanna's List</Muted></span>
                      </RecentItem>
                      <RecentItem><Icon size={20} weight={2}>{glyphs.list}</Icon>Joanna's List</RecentItem>
                    </ul>
                  </Card>
                  <Card>
                    <CardHead><CardTitle>Agenda</CardTitle><HeadActions /></CardHead>
                    <DateRow>
                      <DateText>May 29, Wed</DateText>
                      <IconButton aria-label="Previous day"><Icon size={15} weight={2.6}>{glyphs.left}</Icon></IconButton>
                      <IconButton aria-label="Next day"><Icon size={15} weight={2.6}>{glyphs.right}</Icon></IconButton>
                      <TodayButton>Today</TodayButton>
                      <IconButton aria-label="Pick a date"><Icon size={19} weight={2}>{glyphs.calendar}</Icon></IconButton>
                    </DateRow>
                    <Empty>
                      <CalendarArt />
                      <EmptyText>
                        Agenda items from your calendars will show here. <a href="#">Learn more</a>
                      </EmptyText>
                      <AddButton><Icon size={17} weight={1.8}>{glyphs.plus}</Icon>Add calendar integrations</AddButton>
                    </Empty>
                  </Card>
                  <Card>
                    <CardHead><CardTitle>My Work</CardTitle><HeadActions gear /></CardHead>
                  </Card>
                  <Card>
                    <CardHead><CardTitle>Assigned comments</CardTitle><HeadActions /></CardHead>
                  </Card>
                </Cards>
              </Content>
              <ScrollTrack>
                <Caret />
                <ScrollThumb />
                <Caret $down />
              </ScrollTrack>
            </ScrollRow>
          </Main>
        </Body>

        <ImportPills />
        <Dim />
        <Bubble>g.</Bubble>
        <Frame />
        <Arrow width="290" height="210" viewBox="420 743 290 210" fill="none" stroke="#ffd244" strokeWidth="20" strokeLinecap="round" strokeLinejoin="round" aria-hidden="true">
          <path d="M690 757C674 812 606 892 494 886L440 884" />
          <path d="m486 835-48 51 48 49" />
        </Arrow>
      </AppArea>
      <GradientLine />
      <Banner>
        <Guidde>guidde.</Guidde>
        <MadeWith>Made with guidde.com</MadeWith>
      </Banner>
    </Page>
  );
}
